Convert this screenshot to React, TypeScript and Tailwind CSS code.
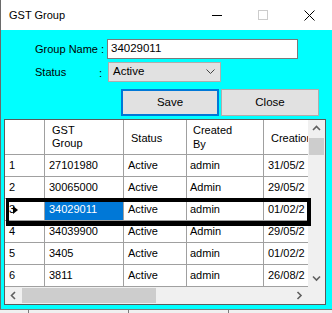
import React from 'react';

const rows = [
  ['1', '27101980', 'Active', 'admin', '31/05/2'],
  ['2', '30065000', 'Active', 'Admin', '29/05/2'],
  ['3', '34029011', 'Active', 'admin', '01/02/2'],
  ['4', '34039900', 'Active', 'Admin', '29/05/2'],
  ['5', '3405', 'Active', 'admin', '01/02/2'],
  ['6', '3811', 'Active', 'admin', '26/08/2'],
];

function Chevron({ dir }: { dir: 'up' | 'down' | 'left' | 'right' }) {
  const pts = {
    up: '1,5 4.5,1.5 8,5',
    down: '1,1.5 4.5,5 8,1.5',
    left: '5,1 1.5,4.5 5,8',
    right: '1.5,1 5,4.5 1.5,8',
  }[dir];
  const w = dir === 'up' || dir === 'down' ? 9 : 7;
  const h = dir === 'up' || dir === 'down' ? 7 : 9;
  return (
    <svg width={w} height={h} viewBox={`0 0 ${w} ${h}`}>
      <polyline points={pts} fill="none" stroke="#606060" strokeWidth="1.6" />
    </svg>
  );
}

export default function App() {
  return (
    <div className="relative w-[332px] h-[313px] overflow-hidden bg-[#f0f0f0] font-['Liberation_Sans',Arial,sans-serif] text-[11px] text-black">
      {/* title bar */}
      <div className="flex h-[30px] items-center bg-white border-l border-[#6a6a6a]">
        <span className="ml-[8px] text-[11px]">GST Group</span>
        <div className="ml-auto flex h-full">
          <div className="flex w-[46px] items-center justify-center">
            <div className="h-px w-[10px] bg-black" />
          </div>
          <div className="flex w-[46px] items-center justify-center">
            <div className="h-[10px] w-[10px] border border-[#cccccc]" />
          </div>
          <div className="flex w-[46px] items-center justify-center">
            <svg width="11" height="11" viewBox="0 0 11 11">
              <path d="M0.5 0.5 L10.5 10.5 M10.5 0.5 L0.5 10.5" stroke="#000" strokeWidth="1" />
            </svg>
          </div>
        </div>
      </div>

      {/* form body */}
      <div className="flex h-[279px] flex-col bg-[#00ffff] border-l border-[#6a6a6a]">
        <div className="mt-[9px] flex h-[20px] items-center">
          <span className="ml-[34px] w-[72px]">Group Name :</span>
          <div className="flex h-[20px] w-[191px] items-center border border-[#7a7a7a] bg-white pl-[3px] text-[11.5px]">
            34029011
          </div>
        </div>

        <div className="mt-[3px] flex h-[20px] items-center">
          <span className="ml-[34px] w-[64px]">Status</span>
          <span className="w-[9px] pt-[2px]">:</span>
          <div className="flex h-[20px] w-[113px] items-center border border-[#adadad] bg-[#e1e1e1] pl-[4px] pr-[5px] text-[11.5px]">
            <span>Active</span>
            <span className="ml-auto">
              <svg width="9" height="6" viewBox="0 0 9 6">
                <polyline points="0.5,0.5 4.5,4.5 8.5,0.5" fill="none" stroke="#444" strokeWidth="1" />
              </svg>
            </span>
          </div>
        </div>

        <div className="mt-[7px] flex">
          <button className="ml-[120px] flex h-[27px] w-[98px] items-center justify-center border-2 border-[#0078d7] bg-[#e1e1e1] text-[11.5px]">
            Save
          </button>
          <button className="ml-[2px] flex h-[27px] w-[98px] items-center justify-center border border-[#adadad] bg-[#e1e1e1] text-[11.5px]">
            Close
          </button>
        </div>

        {/* data grid */}
        <div className="ml-[3px] mt-[3px] flex h-[186px] w-[322px] flex-col border border-[#5a5a5a] bg-white">
          <div className="flex h-[167px]">
            <div className="w-[303px] overflow-hidden">
              <div className="flex h-[35px] w-[400px] border-b border-[#a0a0a0]">
                <div className="w-[40px] border-r border-[#a0a0a0]" />
                <div className="flex w-[79px] items-center whitespace-pre-line border-r border-[#a0a0a0] pl-[7px] leading-[13px]">
                  {'GST\nGroup'}
                </div>
                <div className="flex w-[63px] items-center border-r border-[#a0a0a0] pl-[7px] pt-[3px]">Status</div>
                <div className="flex w-[77px] items-center whitespace-pre-line border-r border-[#a0a0a0] pl-[6px] leading-[14px]">
                  {'Created\n By'}
                </div>
                <div className="flex w-[100px] items-center pl-[7px] pt-[3px]">Creation Date</div>
              </div>
              {rows.map((r, i) => (
                <div key={r[0]} className="flex h-[22px] w-[400px] border-b border-[#a0a0a0]">
                  <div className="flex w-[40px] items-center border-r border-[#a0a0a0] pl-[4px]">
                    <span>{r[0]}</span>
                    {i === 2 && (
                      <svg width="5" height="8" viewBox="0 0 5 8" className="ml-[-2px]">
                        <polygon points="0,0 5,4 0,8" fill="#000" />
                      </svg>
                    )}
                  </div>
                  <div
                    className={
                      i === 2
                        ? 'flex w-[79px] items-center border-r border-[#a0a0a0] bg-[#0078d7] pl-[4px] text-white'
                        : 'flex w-[79px] items-center border-r border-[#a0a0a0] pl-[4px]'
                    }
                  >
                    {r[1]}
                  </div>
                  <div className="flex w-[63px] items-center border-r border-[#a0a0a0] pl-[4px]">{r[2]}</div>
                  <div className="flex w-[77px] items-center border-r border-[#a0a0a0] pl-[3px]">{r[3]}</div>
                  <div className="flex w-[100px] items-center pl-[4px]">{r[4]}</div>
                </div>
              ))}
            </div>
            {/* vertical scrollbar */}
            <div className="flex w-[17px] flex-col bg-[#f0f0f0]">
              <div className="flex h-[17px] items-center justify-center">
                <Chevron dir="up" />
              </div>
              <div className="mx-[1px] mt-[1px] h-[17px] bg-[#cdcdcd]" />
              <div className="flex-1" />
              <div className="flex h-[17px] items-center justify-center">
                <Chevron dir="down" />
              </div>
            </div>
          </div>
          {/* horizontal scrollbar */}
          <div className="flex h-[17px]">
            <div className="flex w-[303px] bg-[#f0f0f0]">
              <div className="flex w-[17px] items-center justify-center">
                <Chevron dir="left" />
              </div>
              <div className="my-[1px] w-[134px] bg-[#cdcdcd]" />
              <div className="flex-1" />
              <div className="flex w-[17px] items-center justify-center">
                <Chevron dir="right" />
              </div>
            </div>
            <div className="w-[17px] bg-[#f0f0f0]" />
          </div>
        </div>
      </div>

      {/* window behind */}
      <div className="flex h-[4px] border-t border-[#7a7a7a] bg-[#f0f0f0]">
        <div className="ml-[28px] w-px bg-[#7a7a7a]" />
        <div className="ml-[99px] w-px bg-[#7a7a7a]" />
        <div className="ml-[99px] w-px bg-[#7a7a7a]" />
      </div>

      {/* highlight frame around selected row */}
      <div className="absolute left-[6px] top-[198px] h-[28px] w-[305px] border-t-4 border-r-4 border-b-[5px] border-l-[3px] border-black" />
    </div>
  );
}
